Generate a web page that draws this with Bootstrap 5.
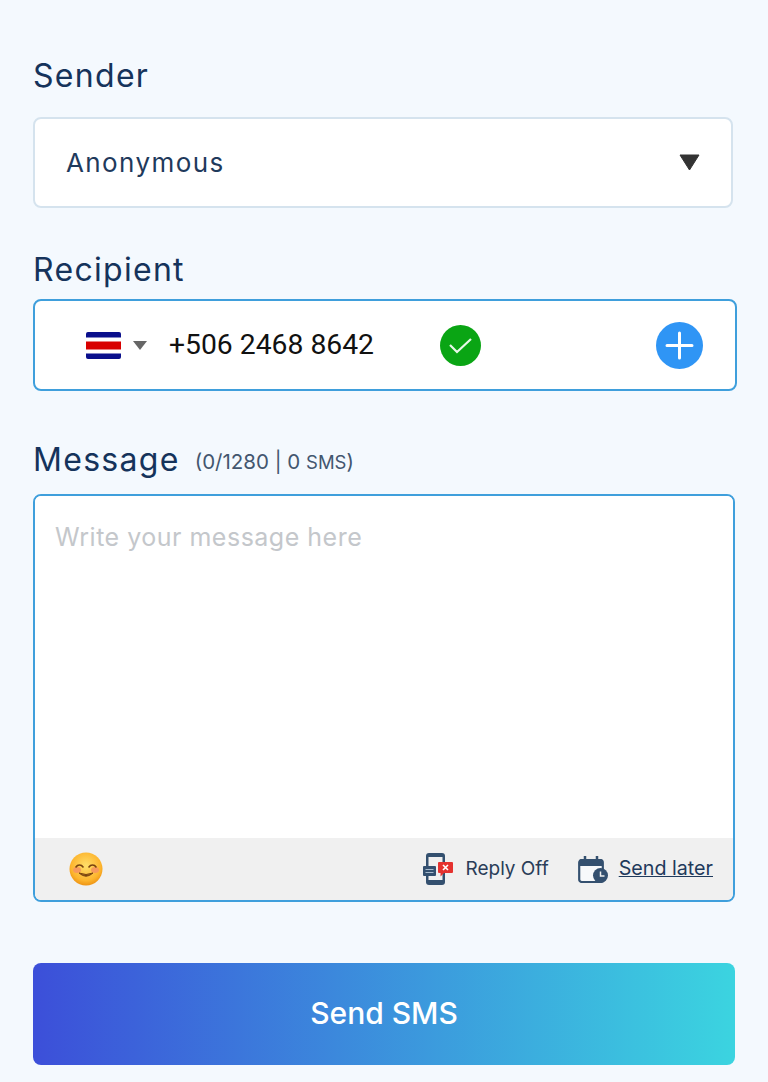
<!DOCTYPE html>
<html lang="en">
<head>
    <meta charset="UTF-8">
    <meta name="viewport" content="width=device-width, initial-scale=1.0">
    <title>Send SMS</title>
    <link href="https://cdn.jsdelivr.net/npm/bootstrap@5.3.0/dist/css/bootstrap.min.css" rel="stylesheet">
    <style>
        body {
            background-color: #f4f9fe;
            font-family: Inter, "Open Sans", sans-serif;
            color: #15335b;
        }
        .sms-page {
            height: 1082px;
            overflow: hidden;
            padding: 55px 31px 0 33px;
        }
        .field-label {
            font-size: 32px;
            line-height: 42px;
            letter-spacing: 1.3px;
            color: #15335b;
            margin: 0;
        }
        .sender-select.form-select {
            width: 700px;
            height: 91px;
            margin-top: 20px;
            padding: 0 31px;
            font-size: 26px;
            letter-spacing: 1.4px;
            color: #1f3a5c;
            border: 2px solid #d5e3ee;
            border-radius: 8px;
            background-size: 21px 17px;
            background-position: right 31px center;
            background-image: url("data:image/svg+xml,%3Csvg xmlns='http://www.w3.org/2000/svg' viewBox='0 0 21 17'%3E%3Cpath d='M1 1h19L10.500 16z' fill='%23333' stroke='%23333' stroke-linejoin='round'/%3E%3C/svg%3E");
        }
        .recipient-label { margin-top: 41px; }
        .phone-box {
            width: 704px;
            height: 92px;
            margin-top: 8px;
            padding: 0 32px 0 51px;
            background: #fff;
            border: 2px solid #3f9fdc;
            border-radius: 8px;
        }
        .flag-caret {
            width: 0;
            height: 0;
            margin: 0 22px 0 12px;
            border-left: 7px solid transparent;
            border-right: 7px solid transparent;
            border-top: 9px solid #666;
        }
        .phone-number {
            width: 271px;
            font-family: Roboto, sans-serif;
            font-size: 28.3px;
            color: #111;
        }
        .message-head { margin-top: 48px; }
        .message-count {
            margin-left: 15px;
            padding-top: 4px;
            font-size: 20.5px;
            color: #43566f;
        }
        .count-unit { font-size: 18.5px; }
        .message-box {
            width: 702px;
            height: 408px;
            margin-top: 13px;
            background: #fff;
            border: 2px solid #3f9fdc;
            border-radius: 8px;
            overflow: hidden;
        }
        .message-input.form-control {
            padding: 24px 20px;
            border: 0;
            border-radius: 0;
            resize: none;
            font-size: 25px;
            line-height: 34px;
            letter-spacing: .5px;
            background: #fff;
        }
        .message-input::placeholder { color: #c4c7cb; opacity: 1; }
        .message-tools {
            height: 62px;
            padding: 0 20px 0 34px;
            background: #f0f0f0;
            font-size: 19px;
            color: #2a3d58;
        }
        .reply-text { margin-left: 12px; }
        .later-icon { margin-left: 29px; }
        .send-later {
            margin-left: 11px;
            font-size: 19.7px;
            color: #1f3a5c;
        }
        .send-btn.btn {
            width: 702px;
            height: 102px;
            margin-top: 61px;
            padding-bottom: 8px;
            border: 0;
            border-radius: 8px;
            font-size: 30px;
            font-weight: 500;
            color: #fff;
            background: linear-gradient(90deg, #3c4fd9, #3bd4e0);
        }
    </style>
</head>
<body>
    <form class="sms-page">
        <label class="field-label d-block" for="sender">Sender</label>
        <select class="form-select sender-select" id="sender">
            <option>Anonymous</option>
        </select>

        <label class="field-label d-block recipient-label">Recipient</label>
        <div class="phone-box d-flex align-items-center">
            <svg width="35" height="27" viewBox="0 0 36 27" preserveAspectRatio="none">
                <rect width="36" height="27" rx="2" fill="#fff"/>
                <path d="M2 0h32a2 2 0 0 1 2 2v3.500H0V2a2 2 0 0 1 2-2z" fill="#0a0f8c"/>
                <rect y="9.500" width="36" height="8" fill="#d80000"/>
                <path d="M0 21.500h36V25a2 2 0 0 1-2 2H2a2 2 0 0 1-2-2z" fill="#0a0f8c"/>
            </svg>
            <span class="flag-caret"></span>
            <span class="phone-number">+506 2468 8642</span>
            <svg width="41" height="41" viewBox="0 0 41 41">
                <circle cx="20.500" cy="20.500" r="20.500" fill="#0aa514"/>
                <path d="M10 20l7 7 14-13" fill="none" stroke="#e8f8e8" stroke-width="2.200"/>
            </svg>
            <svg class="ms-auto" width="47" height="47" viewBox="0 0 47 47">
                <circle cx="23.500" cy="23.500" r="23.500" fill="#2f95f5"/>
                <path d="M23.500 11v25M11 23.500h25" stroke="#fff" stroke-width="3" stroke-linecap="round"/>
            </svg>
        </div>

        <div class="message-head d-flex align-items-center">
            <label class="field-label" for="message">Message</label>
            <span class="message-count">(0/1280 | 0 <span class="count-unit">SMS</span>)</span>
        </div>
        <div class="message-box d-flex flex-column">
            <textarea class="form-control message-input flex-grow-1" id="message" placeholder="Write your message here"></textarea>
            <div class="message-tools d-flex align-items-center">
                <svg width="34" height="34" viewBox="0 0 34 34">
                    <defs>
                        <radialGradient id="face" cx="50%" cy="40%" r="60%">
                            <stop offset="0" stop-color="#ffdf6a"/>
                            <stop offset=".75" stop-color="#fdb52e"/>
                            <stop offset="1" stop-color="#ee9414"/>
                        </radialGradient>
                    </defs>
                    <circle cx="17" cy="17" r="16.500" fill="url(#face)"/>
                    <ellipse cx="8" cy="18" rx="4" ry="3" fill="#f79a5c"/>
                    <ellipse cx="26" cy="18" rx="4" ry="3" fill="#f79a5c"/>
                    <path d="M7 15a4 4 0 0 1 7 0M20 15a4 4 0 0 1 7 0" fill="none" stroke="#7a4410" stroke-width="1.600" stroke-linecap="round"/>
                    <path d="M10 21q7 6.500 14 0q-7 3-14 0z" fill="#7a4410" stroke="#7a4410" stroke-width="1" stroke-linejoin="round"/>
                </svg>
                <svg class="ms-auto" width="30" height="32" viewBox="0 0 30 32">
                    <rect x="3" y="0" width="19" height="32" rx="3" fill="#34506f"/>
                    <rect x="5.500" y="4" width="14" height="23" fill="#f0f0f0"/>
                    <path d="M1 13h11a1 1 0 0 1 1 1v8a1 1 0 0 1-1 1H5l-2 2.500V23H1a1 1 0 0 1-1-1v-8a1 1 0 0 1 1-1z" fill="#34506f"/>
                    <path d="M2.500 16.500h8M2.500 19.500h8" stroke="#a9bccf" stroke-width="1"/>
                    <path d="M16 9h13a1 1 0 0 1 1 1v9a1 1 0 0 1-1 1h-8l-3.500 3.500V20H16a1 1 0 0 1-1-1v-9a1 1 0 0 1 1-1z" fill="#e5322f"/>
                    <path d="M20 12l5 5M25 12l-5 5" stroke="#fff" stroke-width="1.600"/>
                </svg>
                <span class="reply-text">Reply Off</span>
                <svg class="later-icon" width="30" height="27" viewBox="0 0 30 27">
                    <rect x="1.200" y="4" width="23.600" height="22" rx="2.500" fill="#f7f9fb" stroke="#34506f" stroke-width="2.200"/>
                    <path d="M1 10V5.500a2.500 2.500 0 0 1 2.500-2.500h19A2.500 2.500 0 0 1 25 5.500V10z" fill="#34506f"/>
                    <path d="M7 0v5M19 0v5" stroke="#34506f" stroke-width="2.500"/>
                    <circle cx="22.500" cy="19.500" r="7.500" fill="#34506f"/>
                    <path d="M22.500 15.500v4.500h4" fill="none" stroke="#f0f0f0" stroke-width="1.500"/>
                </svg>
                <a class="send-later" href="#">Send later</a>
            </div>
        </div>

        <button class="btn send-btn d-block" type="button">Send SMS</button>
    </form>

    <script src="https://cdn.jsdelivr.net/npm/bootstrap@5.3.0/dist/js/bootstrap.bundle.min.js"></script>
</body>
</html>
